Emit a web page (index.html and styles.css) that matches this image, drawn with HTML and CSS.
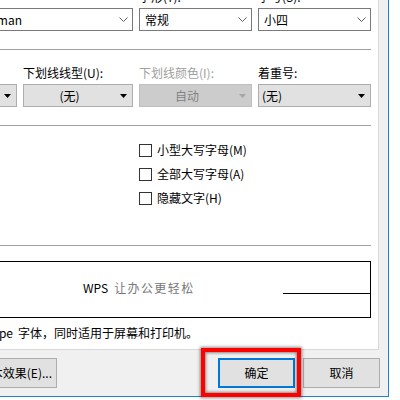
FILE: index.html
```html
<!DOCTYPE html>
<html lang="zh-CN">
<head>
<meta charset="utf-8">
<title>字体</title>
<link rel="stylesheet" href="styles.css">
</head>
<body>
<div class="window">
  <div class="panel">
    <div class="sec sec1">
      <div class="grid labels">
        <span class="lbl span2 out100">西文字体(X):</span>
        <span class="lbl">字形(Y):</span>
        <span class="lbl">字号(S):</span>
      </div>
      <div class="grid">
        <div class="sel sel-w span2 out100">
          <span class="clip-end"><span>Times New Roman</span></span>
          <span class="val"></span>
          <svg class="chev" width="9" height="5" viewBox="0 0 9 5"><polyline points="0.5,0.5 4.5,4.5 8.5,0.5" fill="none" stroke="#606060" stroke-width="1"/></svg>
        </div>
        <div class="sel sel-w">
          <span class="val">常规</span>
          <svg class="chev" width="9" height="5" viewBox="0 0 9 5"><polyline points="0.5,0.5 4.5,4.5 8.5,0.5" fill="none" stroke="#606060" stroke-width="1"/></svg>
        </div>
        <div class="sel sel-w">
          <span class="val">小四</span>
          <svg class="chev" width="9" height="5" viewBox="0 0 9 5"><polyline points="0.5,0.5 4.5,4.5 8.5,0.5" fill="none" stroke="#606060" stroke-width="1"/></svg>
        </div>
      </div>
    </div>
    <div class="sep"></div>
    <div class="sec sec2">
      <div class="grid labels">
        <span class="lbl out80">字体颜色(C):</span>
        <span class="lbl">下划线线型(U):</span>
        <span class="lbl disabled">下划线颜色(I):</span>
        <span class="lbl">着重号:</span>
      </div>
      <div class="grid">
        <div class="sel sel-g out80">
          <span class="val"></span>
          <svg class="tri" width="7" height="4" viewBox="0 0 7 4"><polygon points="0,0 7,0 3.5,4" fill="#000"/></svg>
        </div>
        <div class="sel sel-g">
          <span class="val center">(无)</span>
          <svg class="tri" width="7" height="4" viewBox="0 0 7 4"><polygon points="0,0 7,0 3.5,4" fill="#000"/></svg>
        </div>
        <div class="sel sel-d">
          <span class="val center">自动</span>
          <svg class="tri" width="7" height="4" viewBox="0 0 7 4"><polygon points="0,0 7,0 3.5,4" fill="#a6a6a6"/></svg>
        </div>
        <div class="sel sel-g pad-l">
          <span class="val">(无)</span>
          <svg class="tri" width="7" height="4" viewBox="0 0 7 4"><polygon points="0,0 7,0 3.5,4" fill="#000"/></svg>
        </div>
      </div>
    </div>
    <div class="sep"></div>
    <div class="sec sec3">
      <div class="chk"><span class="box"></span><span>小型大写字母(M)</span></div>
      <div class="chk"><span class="box"></span><span>全部大写字母(A)</span></div>
      <div class="chk"><span class="box"></span><span>隐藏文字(H)</span></div>
    </div>
    <div class="sep"></div>
    <div class="preview">
      <span class="pv-en">WPS</span><span class="pv-cn">让办公更轻松</span>
      <span class="pv-line"></span>
    </div>
    <div class="desc">
      <span class="desc-clip"><span>这是一种 TrueType</span></span>
      <span class="desc-rest">字体，同时适用于屏幕和打印机。</span>
    </div>
  </div>
  <div class="footer">
    <div class="btn btn-fx"><span>文本效果(E)...</span></div>
    <div class="btn btn-ok">确定</div>
    <div class="btn btn-cancel">取消</div>
  </div>
</div>
<div class="annot"></div>
</body>
</html>
```

FILE: styles.css
```css
html, body {
  margin: 0;
  padding: 0;
}
body {
  width: 400px;
  height: 400px;
  overflow: hidden;
  background: #ffffff;
  font-family: "Noto Sans CJK SC", "Noto Sans", sans-serif;
  font-size: 12px;
  color: #000;
  position: relative;
}
.window {
  width: 388px;
  height: 396px;
  border-right: 1px solid #1883d7;
  border-bottom: 1px solid #1883d7;
  background: #f0f0f0;
  display: flex;
  flex-direction: column;
}
.panel {
  width: 378px;
  height: 349px;
  flex: none;
  background: #fff;
  border-right: 1px solid #d9d9d9;
  border-bottom: 1px solid #d9d9d9;
  display: flex;
  flex-direction: column;
}
.sep {
  width: 371px;
  height: 1px;
  flex: none;
  background: #a0a0a0;
}
.grid {
  display: grid;
  grid-template-columns: 17px 110px 113px 113px;
  column-gap: 6px;
  width: 371px;
}
.labels {
  height: 16px;
  line-height: 16px;
  margin-bottom: 3px;
  white-space: nowrap;
}
.lbl.disabled {
  color: #a0a0a0;
}
.span2 {
  grid-column: span 2;
}
.out80 {
  margin-left: -80px;
}
.out100 {
  margin-left: -100px;
}
.sec1 {
  margin-top: -11px;
  margin-bottom: 18px;
}
.sec2 {
  margin-top: 15px;
  margin-bottom: 18px;
}
.sel {
  height: 23px;
  box-sizing: border-box;
  display: flex;
  align-items: center;
  line-height: 16px;
  white-space: nowrap;
}
.sel-w {
  background: #fff;
  border: 1px solid #7a7a7a;
  padding: 0 4px 0 5px;
}
.sel-w.out100 {
  padding-left: 0;
}
.sel-g {
  background: #e1e1e1;
  border: 1px solid #adadad;
  padding: 0 5px 0 0;
}
.sel-g.pad-l {
  padding-left: 3px;
}
.sel-d {
  background: #cccccc;
  border: 1px solid #bfbfbf;
  color: #838383;
  padding: 0 5px 0 0;
}
.val {
  flex: 1;
  min-width: 0;
}
.center {
  text-align: center;
}
.clip-end {
  flex: none;
  width: 121px;
  display: flex;
  justify-content: flex-end;
}
.chev {
  flex: none;
  display: block;
}
.tri {
  flex: none;
  display: block;
  margin-left: 5px;
}
.sec3 {
  margin-top: 12px;
  margin-bottom: 35px;
  padding-left: 139px;
  height: 72px;
}
.chk {
  display: flex;
  height: 24px;
  line-height: 24px;
  white-space: nowrap;
}
.box {
  flex: none;
  width: 13px;
  height: 13px;
  box-sizing: border-box;
  border: 1px solid #333;
  background: #fff;
  margin-top: 6px;
  margin-right: 5px;
}
.preview {
  flex: none;
  position: relative;
  margin-top: 15px;
  margin-left: -20px;
  width: 391px;
  height: 57px;
  box-sizing: border-box;
  border: 1px solid #000;
  padding: 18px 0 0 102px;
  line-height: 16px;
  white-space: nowrap;
}
.pv-en {
  color: #000;
}
.pv-cn {
  color: #777;
  letter-spacing: 1.4px;
  margin-left: 6px;
}
.pv-line {
  position: absolute;
  left: 302px;
  right: 0;
  top: 31px;
  height: 1px;
  background: #000;
}
.desc {
  margin-top: 7px;
  display: flex;
  line-height: 16px;
  white-space: nowrap;
}
.desc-clip {
  flex: none;
  width: 13px;
  display: flex;
  justify-content: flex-end;
}
.desc-rest {
  margin-left: 5px;
}
.footer {
  flex: 1;
  display: flex;
  align-items: flex-start;
  padding: 8px 8px 0 0;
}
.btn {
  flex: none;
  height: 30px;
  box-sizing: border-box;
  background: #e1e1e1;
  border: 1px solid #adadad;
  display: flex;
  align-items: center;
  justify-content: center;
  line-height: 16px;
  white-space: nowrap;
}
.btn-fx {
  margin-left: -30px;
  width: 87px;
  justify-content: flex-end;
  padding-right: 4px;
}
.btn-ok {
  margin-left: auto;
  width: 77px;
  border: 2px solid #0078d7;
}
.btn-cancel {
  margin-left: 8px;
  width: 77px;
}
.annot {
  position: absolute;
  left: 201px;
  top: 348px;
  width: 100px;
  height: 49px;
  box-sizing: border-box;
  border: 4px solid #ff0000;
  box-shadow: 0 0 3px 1px rgba(0, 0, 0, 0.45), inset 0 0 3px 1px rgba(0, 0, 0, 0.45);
}
```
